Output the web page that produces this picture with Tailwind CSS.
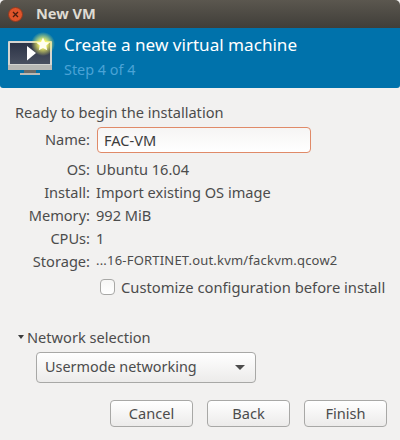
<!doctype html>
<html><head><meta charset="utf-8"><script src="https://cdn.jsdelivr.net/npm/@tailwindcss/browser@4"></script></head>
<body class="m-0">
<div class="w-[400px] h-[440px] overflow-hidden flex flex-col bg-[#f2f1f0] text-[#4c4c4c] text-[14.6px] font-['Noto_Sans',sans-serif]">
  <header class="h-[28px] shrink-0 flex items-center rounded-t-[5px] bg-gradient-to-b from-[#5b574f] to-[#403e39]">
    <div class="ml-[8px] w-[15px] h-[15px] rounded-full bg-[#e0542a] border border-[#8f3a20] flex items-center justify-center">
      <svg width="7" height="7" viewBox="0 0 7 7"><path d="M1 1l5 5M6 1l-5 5" stroke="#4a1d0f" stroke-width="1.3"/></svg>
    </div>
    <span class="ml-[13px] font-bold text-[14.6px] text-[#dfdbd2]">New VM</span>
  </header>
  <section class="h-[60px] shrink-0 flex bg-[#0072ab] rounded-b-[3px]">
    <svg class="ml-[7px] mt-[3px]" width="48" height="46" viewBox="0 0 48 46">
      <defs><radialGradient id="g"><stop offset="0.3" stop-color="#f6f56a"/><stop offset="1" stop-color="#f6f56a" stop-opacity="0"/></radialGradient>
      <linearGradient id="s" x1="0" y1="0" x2="0" y2="1"><stop offset="0" stop-color="#2b3346"/><stop offset="1" stop-color="#4a5060"/></linearGradient></defs>
      <rect x="1" y="10" width="44" height="29" rx="1" fill="#d4d4d0"/>
      <rect x="3" y="12" width="40" height="21" fill="url(#s)"/>
      <rect x="1" y="34" width="44" height="5" fill="#b8b8b4"/>
      <rect x="17" y="39" width="12" height="3" fill="#6a6a68"/>
      <rect x="13" y="42" width="20" height="2" fill="#b9b9b5"/>
      <path d="M20 15l9 7-9 7.500z" fill="#fff"/>
      <circle cx="36" cy="13" r="12" fill="url(#g)"/>
      <path d="M36 6.500l2 4.400 4.800.5-3.600 3.200 1 4.700-4.200-2.400-4.200 2.400 1-4.700-3.600-3.200 4.800-.5z" fill="#fffef0"/>
    </svg>
    <div class="ml-[9px] flex flex-col">
      <div class="mt-[2px] h-[29px] leading-[29px] text-[17.100px] text-white">Create a new virtual machine</div>
      <div class="h-[22px] leading-[22px] text-[14.4px] text-[#4aa3d6]">Step 4 of 4</div>
    </div>
  </section>
  <main class="flex flex-col relative">
    <div class="ml-[15px] mt-[14px] h-[20px] leading-[20px]">Ready to begin the installation</div>
    <div class="mt-[5px] flex items-center h-[26px]">
      <span class="w-[90px] text-right">Name:</span>
      <div class="ml-[7px] w-[214px] h-[26px] leading-[24px] px-[6px] rounded-[4px] border border-[#e08a68] bg-gradient-to-b from-[#f6f5f4] to-white text-[#3c3c3c]">FAC-VM</div>
    </div>
    <div class="mt-[5px] flex flex-col">
      <div class="flex h-[23px] leading-[23px]"><span class="w-[90px] text-right">OS:</span><span class="ml-[6px]">Ubuntu 16.04</span></div>
      <div class="flex h-[23px] leading-[23px]"><span class="w-[90px] text-right">Install:</span><span class="ml-[6px]">Import existing OS image</span></div>
      <div class="flex h-[23px] leading-[23px]"><span class="w-[90px] text-right">Memory:</span><span class="ml-[6px]">992 MiB</span></div>
      <div class="flex h-[23px] leading-[23px]"><span class="w-[90px] text-right">CPUs:</span><span class="ml-[6px]">1</span></div>
      <div class="flex h-[22px] leading-[22px]"><span class="w-[90px] text-right">Storage:</span><span class="ml-[6px] text-[13px] tracking-[0.2px] leading-[20px]">...16-FORTINET.out.kvm/fackvm.qcow2</span></div>
    </div>
    <div class="mt-[7px] flex items-center h-[16px]">
      <div class="ml-[100px] w-[15px] h-[16px] rounded-[4px] border border-[#a8a8a6] bg-gradient-to-b from-[#f6f6f5] to-white"></div>
      <span class="ml-[6px] text-[14.75px]">Customize configuration before install</span>
    </div>
    <div class="mt-[32px] h-[20px] flex items-center leading-[20px]">
      <svg class="ml-[18px]" width="6" height="4" viewBox="0 0 6 4"><path d="M0 0h6l-3 4z" fill="#3c3c3c"/></svg>
      <span class="ml-[3px]">Network selection</span>
    </div>
    <div class="ml-[36px] mt-[5px] w-[220px] h-[31px] flex items-center justify-between pl-[8px] pr-[10px] rounded-[4px] border border-[#a8a8a6] bg-gradient-to-b from-white to-[#ecebea]">
      <span class="text-[14.4px] leading-[27px] -mt-[2px]">Usermode networking</span>
      <svg width="10" height="5" viewBox="0 0 10 5"><path d="M0 0h10l-5 5z" fill="#4c4c4c"/></svg>
    </div>
    <div class="mt-[17px] flex justify-end gap-[14px] pr-[13px]">
      <div class="w-[83px] h-[27px] leading-[24px] text-center rounded-[4px] border border-[#a8a8a6] bg-gradient-to-b from-white to-[#ecebea]">Cancel</div>
      <div class="w-[83px] h-[27px] leading-[24px] text-center rounded-[4px] border border-[#a8a8a6] bg-gradient-to-b from-white to-[#ecebea]">Back</div>
      <div class="w-[83px] h-[27px] leading-[24px] text-center rounded-[4px] border border-[#a8a8a6] bg-gradient-to-b from-white to-[#ecebea]">Finish</div>
    </div>
  </main>
</div>
</body></html>
